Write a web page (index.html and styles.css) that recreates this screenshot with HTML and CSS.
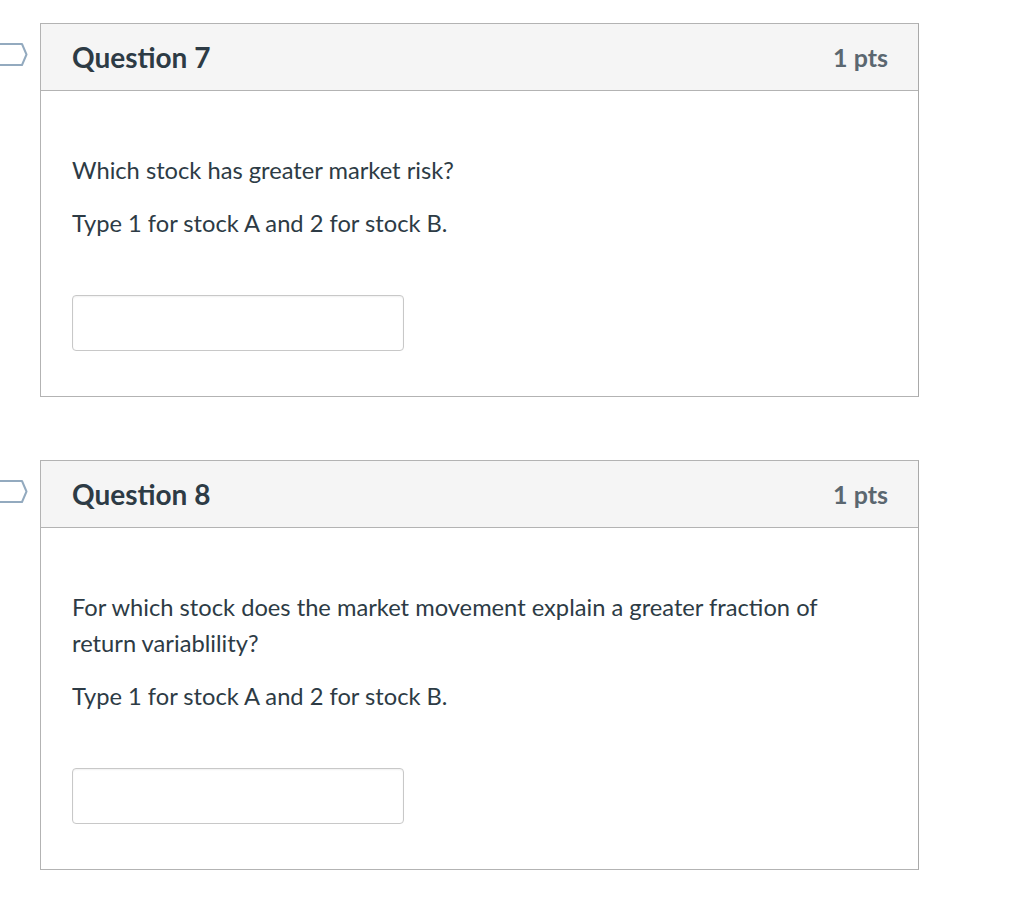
FILE: index.html
```html
<!DOCTYPE html>
<html>
<head>
<meta charset="utf-8">
<link rel="stylesheet" href="styles.css">
</head>
<body>
<div class="page">
  <div class="question">
    <svg class="flag" width="40" height="30" viewBox="0 0 40 30"><path d="M-4 4 H22 L26.5 14.5 L22 25 H-4" fill="none" stroke="#93aabf" stroke-width="2" stroke-linejoin="round"/></svg>
    <div class="card">
      <div class="card-header">
        <span class="title">Question 7</span>
        <span class="pts">1 pts</span>
      </div>
      <div class="card-body">
        <p>Which stock has greater market risk?</p>
        <p>Type 1 for stock A and 2 for stock B.</p>
        <div class="answer"></div>
      </div>
    </div>
  </div>
  <div class="question">
    <svg class="flag" width="40" height="30" viewBox="0 0 40 30"><path d="M-4 4 H22 L26.5 14.5 L22 25 H-4" fill="none" stroke="#93aabf" stroke-width="2" stroke-linejoin="round"/></svg>
    <div class="card">
      <div class="card-header">
        <span class="title">Question 8</span>
        <span class="pts">1 pts</span>
      </div>
      <div class="card-body">
        <p>For which stock does the market movement explain a greater fraction of return variablility?</p>
        <p>Type 1 for stock A and 2 for stock B.</p>
        <div class="answer"></div>
      </div>
    </div>
  </div>
</div>
</body>
</html>
```
FILE: styles.css
```css
html, body {
  margin: 0;
  padding: 0;
  background: #fff;
}
body {
  font-family: Lato, "Liberation Sans", sans-serif;
  color: #2d3b45;
}
.page {
  padding-top: 23px;
  display: flex;
  flex-direction: column;
  gap: 63px;
}
.question {
  position: relative;
  padding-left: 40px;
  width: 879px;
}
.flag {
  position: absolute;
  left: 0;
  top: 17px;
}
.card {
  border: 1px solid #b3b3b3;
  border-right-color: #a9a9a9;
}
.card-header {
  background: #f5f5f5;
  border-bottom: 1px solid #b3b3b3;
  height: 66px;
  display: flex;
  align-items: center;
  justify-content: space-between;
  padding: 0 30px 0 31px;
}
.title {
  font-weight: 700;
  font-size: 28px;
  color: #2d3b45;
}
.pts {
  font-weight: 700;
  font-size: 25px;
  color: #5b6770;
}
.card-body {
  padding: 61px 31px 45px 31px;
}
.card-body p {
  margin: 0 0 17px 0;
  font-size: 23.7px;
  line-height: 36px;
  max-width: 790px;
}
.answer {
  margin-top: 54px;
  width: 330px;
  height: 54px;
  border: 1px solid #c8c8c8;
  border-radius: 4px;
  box-shadow: inset 0 1px 2px rgba(0,0,0,0.06);
}
.card-body p:last-of-type {
  margin-bottom: 0;
}
```
